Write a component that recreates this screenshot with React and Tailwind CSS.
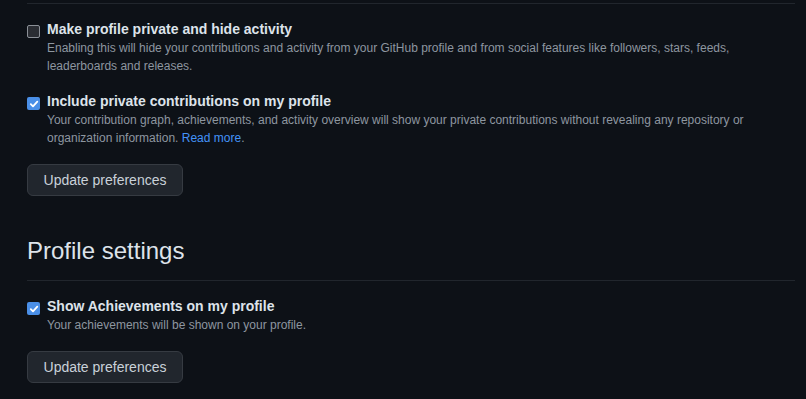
import React, { useState } from "react";

function Checkbox({ checked, onChange }) {
  return (
    <button
      type="button"
      onClick={onChange}
      className={`absolute left-0 top-[6px] w-[13px] h-[13px] rounded-[2px] flex items-center justify-center ${
        checked ? "bg-[#4a8fe7]" : "bg-[#2a2d33] border border-[#8b9097]"
      }`}
    >
      {checked && (
        <svg width="10" height="10" viewBox="0 0 10 10" fill="none">
          <path d="M1.8 5.2 L4 7.4 L8.3 2.6" stroke="white" strokeWidth="1.8" strokeLinecap="round" strokeLinejoin="round" />
        </svg>
      )}
    </button>
  );
}

function Option({ title, checked, onChange, children, className = "" }) {
  return (
    <div className={`relative pl-[20px] ${className}`}>
      <Checkbox checked={checked} onChange={onChange} />
      <div className="text-[14px] leading-[20px] font-bold text-[#dde3ea]">{title}</div>
      <p className="text-[12px] leading-[18px] text-[#8d96a0]">{children}</p>
    </div>
  );
}

function UpdateButton() {
  return (
    <button className="mt-[17px] h-[32px] w-[156px] rounded-[6px] bg-[#21262d] border border-[#363b42] text-[14px] text-[#c9d1d9]">
      Update preferences
    </button>
  );
}

export default function App() {
  const [priv, setPriv] = useState(false);
  const [contrib, setContrib] = useState(true);
  const [achieve, setAchieve] = useState(true);

  return (
    <div
      className="min-h-screen bg-[#0d1117] pl-[27px] pr-[11px] pt-[3px]"
      style={{ fontFamily: '"Liberation Sans", Arial, sans-serif' }}
    >
      <div className="border-t border-[#21262d] pt-[15px]">
        <Option title="Make profile private and hide activity" checked={priv} onChange={() => setPriv(!priv)}>
          Enabling this will hide your contributions and activity from your GitHub profile and from social features like followers, stars, feeds, leaderboards and releases.
        </Option>
        <Option
          className="mt-[16px]"
          title="Include private contributions on my profile"
          checked={contrib}
          onChange={() => setContrib(!contrib)}
        >
          Your contribution graph, achievements, and activity overview will show your private contributions without revealing any repository or organization information.{" "}
          <a href="#" className="text-[#4493f8]">Read more</a>.
        </Option>
        <UpdateButton />
      </div>

      <div className="mt-[40px] pb-[14px] border-b border-[#21262d]">
        <h2 className="text-[24px] leading-[30px] font-normal text-[#dde3ea]">Profile settings</h2>
      </div>

      <div className="pt-[15px]">
        <Option title="Show Achievements on my profile" checked={achieve} onChange={() => setAchieve(!achieve)}>
          Your achievements will be shown on your profile.
        </Option>
        <UpdateButton />
      </div>
    </div>
  );
}
